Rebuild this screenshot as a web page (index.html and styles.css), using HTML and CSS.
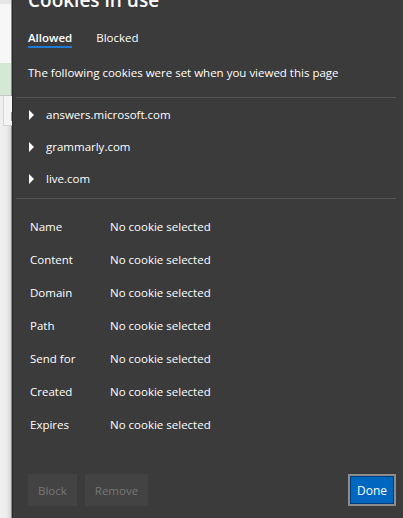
FILE: index.html
```html
<!DOCTYPE html>
<html>
<head>
<meta charset="utf-8">
<link rel="stylesheet" href="styles.css">
</head>
<body>
<div class="screen">
  <div class="backdrop">
    <div class="bd-top"></div>
    <div class="bd-white"></div>
    <div class="bd-green"></div>
    <div class="bd-row"><span class="bd-mark"></span></div>
    <div class="bd-rest"></div>
  </div>
  <div class="dialog">
    <h1 class="title">Cookies in use</h1>
    <div class="tabs">
      <span class="tab active">Allowed</span>
      <span class="tab">Blocked</span>
    </div>
    <p class="intro">The following cookies were set when you viewed this page</p>
    <ul class="sites">
      <li class="site"><span class="caret"></span>answers.microsoft.com</li>
      <li class="site"><span class="caret"></span>grammarly.com</li>
      <li class="site"><span class="caret"></span>live.com</li>
    </ul>
    <dl class="details">
      <div class="row"><dt>Name</dt><dd>No cookie selected</dd></div>
      <div class="row"><dt>Content</dt><dd>No cookie selected</dd></div>
      <div class="row"><dt>Domain</dt><dd>No cookie selected</dd></div>
      <div class="row"><dt>Path</dt><dd>No cookie selected</dd></div>
      <div class="row"><dt>Send for</dt><dd>No cookie selected</dd></div>
      <div class="row"><dt>Created</dt><dd>No cookie selected</dd></div>
      <div class="row"><dt>Expires</dt><dd>No cookie selected</dd></div>
    </dl>
    <div class="actions">
      <button class="btn disabled">Block</button>
      <button class="btn disabled">Remove</button>
      <span class="spacer"></span>
      <button class="btn primary">Done</button>
    </div>
  </div>
</div>
</body>
</html>
```

FILE: styles.css
```css
* { box-sizing: border-box; }
html, body { margin: 0; padding: 0; }
body {
  width: 403px;
  height: 518px;
  overflow: hidden;
  font-family: "Open Sans", "Noto Sans", sans-serif;
  font-size: 11.5px;
  color: #ffffff;
  background: #3b3b3b;
}
.screen {
  display: flex;
  height: 518px;
}
.backdrop {
  width: 12px;
  flex: none;
  display: flex;
  flex-direction: column;
  background: linear-gradient(to right, #f0f0f0 0, #ececec 8px, #d8d8d8 11px);
}
.bd-top { height: 4px; background: #e6e6e6; }
.bd-white { height: 59px; background: #f7f7f7; }
.bd-green { height: 33px; background: #d5e8d4; border-bottom: 1px solid #c8c8c8; }
.bd-row {
  height: 30px;
  background: #f4f4f4;
  border-bottom: 1px solid #d0d0d0;
  border-left: 1px solid #d6d6d6;
  margin-left: 3px;
  position: relative;
}
.bd-mark {
  position: absolute;
  right: 0;
  top: 16px;
  width: 1px;
  height: 9px;
  background: #c2823e;
}
.bd-rest { flex: 1; background: linear-gradient(to right, #f0f0f0 0, #ececec 7px, #d4d4d4 11px); }
.dialog {
  flex: 1;
  display: flex;
  flex-direction: column;
  background: #3b3b3b;
  border-left: 1px solid #2a2a2a;
  box-shadow: -1px 0 0 #8a8a8a;
  padding: 0 7px 0 3px;
}
.title {
  margin: -12px 0 0 12px;
  font-size: 19px;
  font-weight: 600;
  line-height: 24px;
  color: #ffffff;
}
.tabs {
  display: flex;
  gap: 24px;
  margin: 18px 0 0 12px;
}
.tab {
  line-height: 16px;
  color: #ffffff;
}
.tab.active {
  font-weight: 600;
  border-bottom: 2px solid #1f7bd6;
}
.tab:not(.active) { padding-bottom: 2px; }
.intro {
  margin: 17px 0 0 12px;
  line-height: 16px;
}
.sites {
  list-style: none;
  margin: 16px 0 0;
  padding: 1px 0 3px;
  border-top: 1px solid #555555;
  border-bottom: 1px solid #555555;
}
.site {
  display: flex;
  align-items: center;
  height: 32px;
  padding-left: 13px;
  line-height: 16px;
}
.caret {
  width: 0;
  height: 0;
  border-top: 5px solid transparent;
  border-bottom: 5px solid transparent;
  border-left: 5px solid #ffffff;
  margin-right: 12px;
}
.details {
  margin: 11px 0 0;
  padding: 0 0 0 14px;
}
.row {
  display: flex;
  height: 33px;
  align-items: center;
}
.row dt { width: 80px; margin: 0; }
.row dd { margin: 0; }
.actions {
  margin-top: auto;
  margin-bottom: 12px;
  display: flex;
  gap: 8px;
  padding-left: 12px;
}
.spacer { flex: 1; }
.btn {
  font-family: inherit;
  font-size: 11.5px;
  height: 32px;
  border: none;
  padding: 0 10px;
}
.btn.disabled {
  background: #434343;
  color: #777777;
}
.btn.primary {
  background: #0067c0;
  color: #ffffff;
  width: 48px;
  font-size: 12px;
  border: 2px solid #8c8c8c;
  box-shadow: inset 0 0 0 1px #003c7a;
  padding: 0;
}
```
